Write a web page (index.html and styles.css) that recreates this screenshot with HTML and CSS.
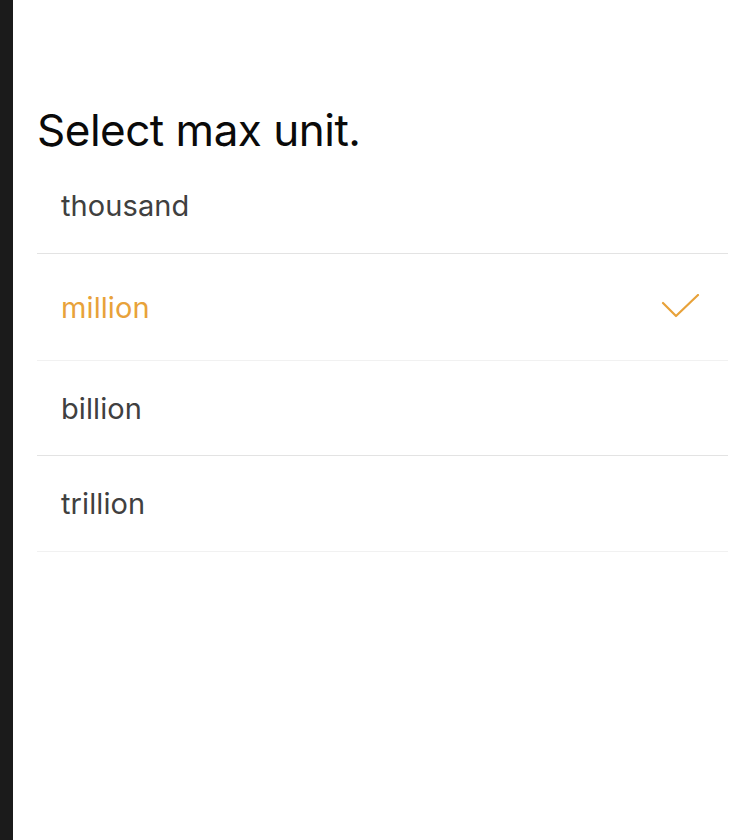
FILE: index.html
```html
<!DOCTYPE html>
<html lang="en">
<head>
    <meta charset="UTF-8">
    <meta name="viewport" content="width=device-width, initial-scale=1.0">
    <title>Select max unit</title>
    <link rel="stylesheet" href="styles.css">
</head>
<body>
    <div class="side-strip"></div>
    <div class="screen">
        <h1 class="title">Select max unit.</h1>
        <ul class="unit-list">
            <li class="unit-row row-first">thousand</li>
            <li class="unit-row row-selected divider-strong">
                <span>million</span>
                <!-- checkmark for the selected unit -->
                <svg class="check" width="40" height="26" viewBox="0 0 40 26">
                    <path d="M2 9 L15 22 L37 1" fill="none" stroke="#e8a23a" stroke-width="2.2" stroke-linecap="round" stroke-linejoin="round"/>
                </svg>
            </li>
            <li class="unit-row row-short divider-light">billion</li>
            <li class="unit-row divider-strong">trillion</li>
            <li class="list-end divider-light"></li>
        </ul>
    </div>
</body>
</html>
```

FILE: styles.css
```css
body {
    margin: 0;
    display: flex;
    height: 100vh;
    background: #ffffff;
    font-family: Inter, "Liberation Sans", sans-serif;
}

.side-strip {
    width: 13px;
    flex-shrink: 0;
    background: #1b1b1b;
}

.screen {
    flex: 1;
    padding: 0 16px 0 24px;
}

.title {
    margin: 103px 0 0 0;
    font-size: 44px;
    font-weight: 400;
    letter-spacing: -0.5px;
    line-height: 54px;
    color: #0a0a0a;
}

.unit-list {
    list-style: none;
    margin: 0;
    padding: 0;
}

.unit-row {
    display: flex;
    align-items: center;
    justify-content: space-between;
    height: 95px;
    padding: 0 27px 0 24px;
    font-size: 29px;
    letter-spacing: 0.1px;
    color: #404040;
}

.row-first {
    height: 96px;
}

.row-selected {
    height: 106px;
    color: #e8a23a;
}

.row-short {
    height: 94px;
}

.divider-strong {
    border-top: 1px solid #e3e3e3;
}

.divider-light {
    border-top: 1px solid #f1f1f1;
}

.check {
    display: block;
}
```
